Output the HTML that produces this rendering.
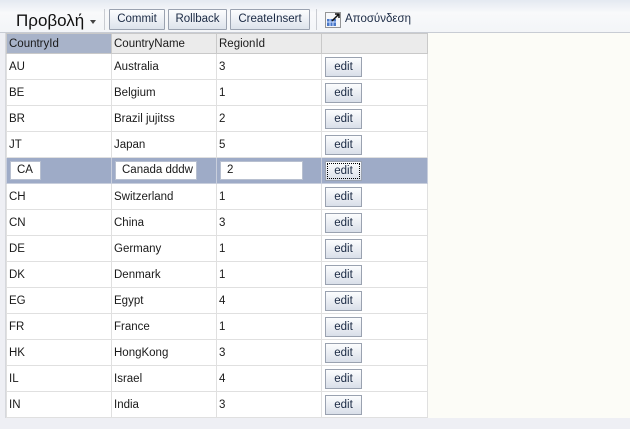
<!DOCTYPE html>
<html><head><meta charset="utf-8"><style>
*{margin:0;padding:0;box-sizing:border-box}
body{width:630px;height:429px;overflow:hidden;background:#fcfcf7;font-family:"Liberation Sans","DejaVu Sans",sans-serif;font-size:11.5px;color:#1a1a1a;position:relative}
#tb{position:absolute;left:0;top:0;width:630px;height:33px;background:linear-gradient(#e4e9f1,#f8f9fb 40%,#f3f5f8);border-bottom:1px solid #c8ccd4}
.v{position:absolute;left:16px;top:11px;font-size:17px;color:#111}
.v:after{content:"";position:absolute;right:-12px;top:9px;border:3px solid transparent;border-top:4px solid #444}
.sep{position:absolute;top:9px;width:1px;height:21px;background:#c9ccd2}
.b{position:absolute;top:9px;height:21px;border:1px solid #9aa2b0;background:linear-gradient(#fcfdfe,#dde3ec);font-size:11.5px;text-align:center;line-height:19px;color:#1b2a44;border-radius:1px}
#left{position:absolute;left:0;top:33px;width:6px;height:385px;background:#eeeff4;border-right:1px solid #d6d8dd}
#bot{position:absolute;left:0;top:418px;width:630px;height:11px;background:#eeeff4}
table{position:absolute;left:6px;top:33px;border-collapse:collapse;background:#fff}
td,th{border:1px solid #e0e0e0;height:26px;padding:0 0 0 2px;text-align:left;font-weight:normal;vertical-align:middle;color:#1a1a1a}
th{height:20px;background:#ebebeb;border-color:#c9c9c9;font-size:11.5px}
th.f{background:#a8b3c9}
td.e{padding-left:3px}
.eb{display:inline-block;width:37px;height:20px;border:1px solid #9aa2b0;background:linear-gradient(#fcfdfe,#d9dfe9);text-align:center;line-height:18px;font-size:11.5px;color:#1b2a44}
tr.s td{background:#9eabc7;border-color:#c8cedc}
.in{display:inline-block;height:19px;background:#fff;border:1px solid #b8c0d0;line-height:17px;padding-left:6px;font-size:11.5px}
</style></head><body>
<div id="tb">
<div class="v">Προβολή</div>
<div class="sep" style="left:104px"></div>
<div class="b" style="left:109px;width:56px">Commit</div>
<div class="b" style="left:168px;width:59px">Rollback</div>
<div class="b" style="left:230px;width:80px">CreateInsert</div>
<div class="sep" style="left:316px"></div>
<svg style="position:absolute;left:325px;top:12px" width="16" height="16" viewBox="0 0 16 16"><rect x="0.5" y="0.5" width="15" height="15" fill="none" stroke="#333" stroke-dasharray="1,1"/><rect x="2" y="7" width="9" height="7" fill="#4a78c8"/><path d="M2 10h9M5 7v7M8 7v7" stroke="#cfe0ff" stroke-width="1"/><path d="M7 9L14 2M10 2h4v4" stroke="#111" stroke-width="1.5" fill="none"/></svg>
<div style="position:absolute;left:345px;top:13px;font-size:11.5px;color:#1b2a44">Αποσύνδεση</div>
</div>
<div id="left"></div>
<table>
<tr><th class="f" style="width:105px">CountryId</th><th style="width:105px">CountryName</th><th style="width:105px">RegionId</th><th style="width:106px"></th></tr>
<tr><td>AU</td><td>Australia</td><td>3</td><td class="e"><span class="eb">edit</span></td></tr>
<tr><td>BE</td><td>Belgium</td><td>1</td><td class="e"><span class="eb">edit</span></td></tr>
<tr><td>BR</td><td>Brazil jujitss</td><td>2</td><td class="e"><span class="eb">edit</span></td></tr>
<tr><td>JT</td><td>Japan</td><td>5</td><td class="e"><span class="eb">edit</span></td></tr>
<tr class="s"><td style="padding-left:3px"><span class="in" style="width:31px">CA</span></td><td style="padding-left:3px"><span class="in" style="width:82px">Canada dddw</span></td><td style="padding-left:3px"><span class="in" style="width:83px">2</span></td><td class="e"><span class="eb" style="outline:1px dotted #000;outline-offset:-3px">edit</span></td></tr>
<tr><td>CH</td><td>Switzerland</td><td>1</td><td class="e"><span class="eb">edit</span></td></tr>
<tr><td>CN</td><td>China</td><td>3</td><td class="e"><span class="eb">edit</span></td></tr>
<tr><td>DE</td><td>Germany</td><td>1</td><td class="e"><span class="eb">edit</span></td></tr>
<tr><td>DK</td><td>Denmark</td><td>1</td><td class="e"><span class="eb">edit</span></td></tr>
<tr><td>EG</td><td>Egypt</td><td>4</td><td class="e"><span class="eb">edit</span></td></tr>
<tr><td>FR</td><td>France</td><td>1</td><td class="e"><span class="eb">edit</span></td></tr>
<tr><td>HK</td><td>HongKong</td><td>3</td><td class="e"><span class="eb">edit</span></td></tr>
<tr><td>IL</td><td>Israel</td><td>4</td><td class="e"><span class="eb">edit</span></td></tr>
<tr><td>IN</td><td>India</td><td>3</td><td class="e"><span class="eb">edit</span></td></tr>
</table>
<div id="bot"></div>
</body></html>
